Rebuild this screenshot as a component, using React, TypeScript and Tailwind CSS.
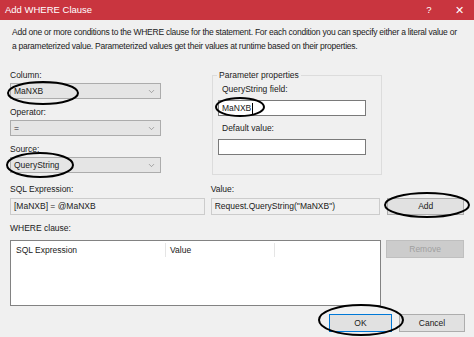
import { ChevronDown } from "lucide-react";

const font = { fontFamily: '"Liberation Sans", Arial, sans-serif' };

function Combo({ value }: { value: string }) {
  return (
    <div className="flex h-[16px] w-[151px] items-center justify-between border border-[#acacac] bg-[#e5e5e5] pl-[3px] pr-[4px]">
      <span>{value}</span>
      <ChevronDown size={9} strokeWidth={1.5} className="text-[#707070]" />
    </div>
  );
}

function Label({ children, className = "" }: { children: React.ReactNode; className?: string }) {
  return <div className={`h-[14px] leading-[14px] ${className}`}>{children}</div>;
}

export default function App() {
  return (
    <div
      className="relative flex h-[337px] w-[474px] flex-col overflow-hidden bg-[#f0f0f0] text-[8.5px] text-[#1a1a1a]"
      style={font}
    >
      {/* Title bar */}
      <div className="flex h-[20px] shrink-0 items-center bg-[#c9353f] pl-[5px] text-[9.5px] text-white">
        <span>Add WHERE Clause</span>
        <span className="ml-auto w-[10px] text-center">?</span>
        <span className="ml-[21px] mr-[10px] text-[11px]">✕</span>
      </div>

      <div className="flex flex-col px-[10px]">
        {/* Description */}
        <p className="mt-[5px] whitespace-nowrap pl-[2px] leading-[14px] tracking-[-0.25px]">
          Add one or more conditions to the WHERE clause for the statement. For each condition you can specify either a literal value or
          <br />
          a parameterized value. Parameterized values get their values at runtime based on their properties.
        </p>

        {/* Column / operator / source + parameter properties */}
        <div className="mt-[15px] flex">
          <div className="flex w-[202px] flex-col">
            <Label>Column:</Label>
            <div className="mt-[1px]">
              <Combo value="MaNXB" />
            </div>
            <Label className="mt-[6px]">Operator:</Label>
            <div className="mt-[1px]">
              <Combo value="=" />
            </div>
            <Label className="mt-[6px]">Source:</Label>
            <div className="mt-[1px]">
              <Combo value="QueryString" />
            </div>
          </div>

          <div className="relative mt-[7px] h-[100px] w-[170px] border border-[#dcdcdc]">
            <span className="absolute -top-[8px] left-[4px] bg-[#f0f0f0] px-[2px] leading-[14px]">Parameter properties</span>
            <div className="flex flex-col pl-[5px] pt-[6px]">
              <Label className="pl-[4px]">QueryString field:</Label>
              <div className="mt-[4px] flex h-[16px] w-[148px] items-center border border-[#7a7a7a] bg-white pl-[3px]">
                MaNXB<span className="ml-px h-[11px] w-px bg-black" />
              </div>
              <Label className="mt-[5px] pl-[4px]">Default value:</Label>
              <div className="mt-[4px] h-[16px] w-[148px] border border-[#7a7a7a] bg-white" />
            </div>
          </div>
        </div>

        {/* SQL expression / value / add */}
        <div className="mt-[7px] flex">
          <div className="flex w-[202px] flex-col">
            <Label>SQL Expression:</Label>
            <div className="mt-[2px] flex h-[17px] w-[195px] items-center border border-[#cccccc] bg-[#f0f0f0] pl-[3px]">
              [MaNXB] = @MaNXB
            </div>
          </div>
          <div className="flex w-[176px] flex-col">
            <Label>Value:</Label>
            <div className="mt-[2px] flex h-[17px] w-[169px] items-center border border-[#cccccc] bg-[#f0f0f0] pl-[3px]">
              Request.QueryString("MaNXB")
            </div>
          </div>
          <div className="ml-[2px] mt-[16px] flex h-[17px] w-[77px] items-center justify-center border border-[#adadad] bg-[#e1e1e1]">
            Add
          </div>
        </div>

        {/* WHERE clause */}
        <Label className="mt-[6px]">WHERE clause:</Label>
        <div className="mt-[5px] flex">
          <div className="h-[66px] w-[372px] border border-[#828282] bg-white">
            <div className="flex h-[18px] items-center">
              <span className="w-[154px] pl-[5px]">SQL Expression</span>
              <span className="h-[14px] w-px bg-[#e5e5e5]" />
              <span className="w-[108px] pl-[4px]">Value</span>
              <span className="h-[14px] w-px bg-[#e5e5e5]" />
            </div>
          </div>
          <div className="ml-[5px] flex h-[18px] w-[78px] items-center justify-center border border-[#bfbfbf] bg-[#cccccc] text-[#a0a0a0]">
            Remove
          </div>
        </div>

        {/* Buttons */}
        <div className="mt-[8px] flex justify-end">
          <div className="flex h-[18px] w-[63px] items-center justify-center border border-[#0078d7] bg-[#e1e1e1]">OK</div>
          <div className="ml-[7px] mr-[-1px] flex h-[18px] w-[66px] items-center justify-center border border-[#adadad] bg-[#e1e1e1]">
            Cancel
          </div>
        </div>
      </div>

      {/* Hand-drawn annotation ellipses */}
      <svg className="pointer-events-none absolute left-0 top-0" width="474" height="337">
        <g fill="none" stroke="#000" strokeWidth="2">
          <ellipse cx="43" cy="93" rx="35" ry="11" />
          <ellipse cx="40" cy="165" rx="33" ry="12" />
          <ellipse cx="240" cy="107" rx="24" ry="9" />
          <ellipse cx="427" cy="205" rx="42" ry="12" />
          <ellipse cx="361" cy="320" rx="42" ry="15" />
        </g>
      </svg>
    </div>
  );
}
